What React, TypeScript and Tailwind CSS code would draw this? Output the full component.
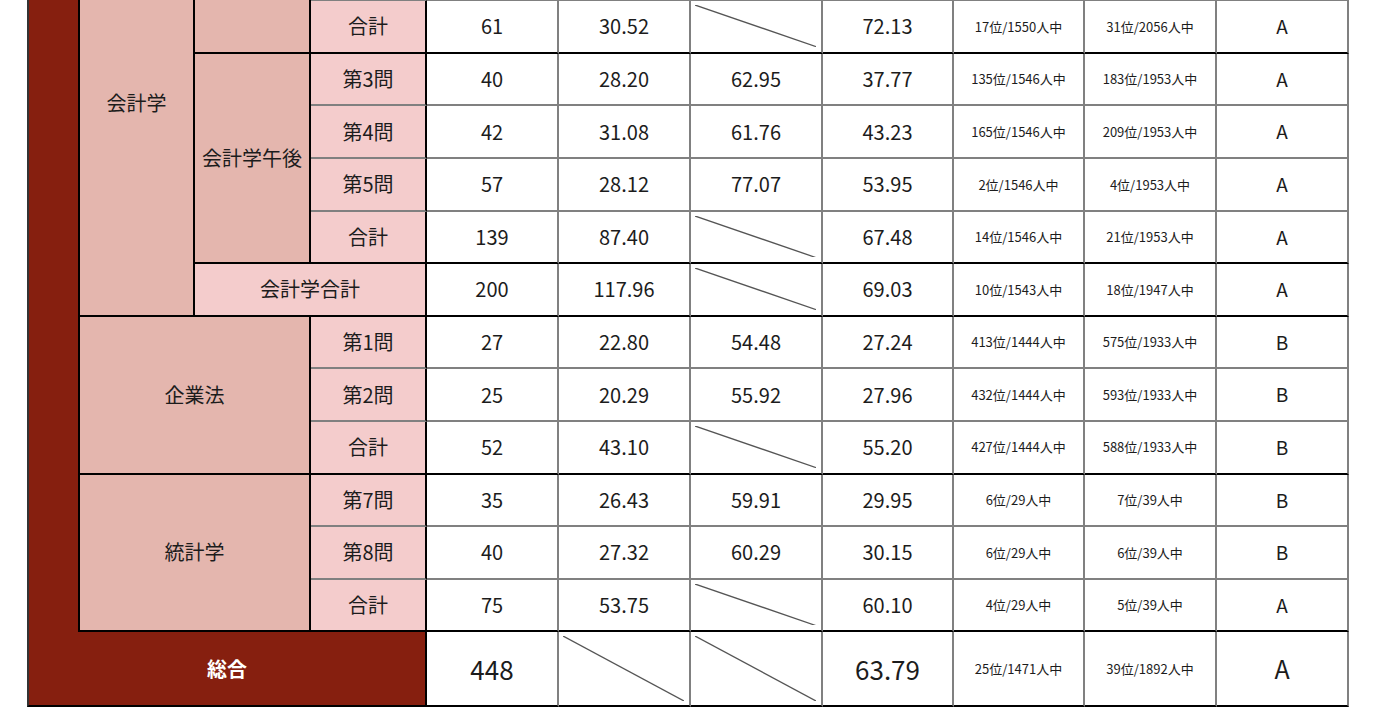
import type { ReactNode } from "react";

type Cell = string | null; // null => diagonal slash

type Row = {
  lead?: ReactNode;
  label?: string;
  vals: Cell[];
  end?: boolean;
};

const catCls =
  "border-r-2 border-b-2 border-black bg-[#e4b6ae] text-center align-middle text-[20px]";
const itemBase =
  "border-r-2 border-b-2 border-r-black bg-[#f4cccc] text-center align-middle text-[20px]";

const Slash = ({ end, big }: { end?: boolean; big?: boolean }) => (
  <td
    className={`relative border-r-2 border-b-2 border-r-[#808080] ${end ? "border-b-black" : "border-b-[#808080]"}`}
  >
    <svg
      className={`absolute left-[4px] top-[4px] w-[calc(100%-9px)] ${big ? "h-[calc(100%-8px)]" : "h-[calc(100%-9px)]"}`}
      viewBox="0 0 100 100"
      preserveAspectRatio="none"
    >
      <line
        x1="0"
        y1="0"
        x2="100"
        y2="100"
        stroke="#555"
        strokeWidth="1.3"
        vectorEffect="non-scaling-stroke"
      />
    </svg>
  </td>
);

const DataCells = ({ vals, end, big }: { vals: Cell[]; end?: boolean; big?: boolean }) => (
  <>
    {vals.map((v, i) => {
      if (v === null) return <Slash key={i} end={end} big={big} />;
      const size =
        i === 4 || i === 5
          ? "text-[13px]"
          : i === 6
            ? big
              ? "text-[25px]"
              : "text-[19px]"
            : big
              ? "text-[26px]"
              : "text-[20px]";
      return (
        <td
          key={i}
          className={`border-r-2 border-b-2 border-r-[#808080] ${end ? "border-b-black" : "border-b-[#808080]"} text-center align-middle ${size}`}
        >
          {v}
        </td>
      );
    })}
  </>
);

// rows of 会計学午前 above the visible area (scrolled out)
const blank: Cell[] = ["", "", "", "", "", "", ""];

const rows: Row[] = [
  {
    lead: (
      <>
        <td rowSpan={14} className="border-l-2 border-r-2 border-l-[#333] border-r-black bg-[#861f0f]" />
        <td rowSpan={8} className={catCls}>
          <div className="-mt-[4px]">会計学</div>
        </td>
        <td rowSpan={3} className={catCls} />
      </>
    ),
    label: " ",
    vals: blank,
  },
  { label: " ", vals: blank },
  { label: "合計", vals: ["61", "30.52", null, "72.13", "17位/1550人中", "31位/2056人中", "A"], end: true },
  {
    lead: (
      <td rowSpan={4} className={catCls}>
        会計学午後
      </td>
    ),
    label: "第3問",
    vals: ["40", "28.20", "62.95", "37.77", "135位/1546人中", "183位/1953人中", "A"],
  },
  { label: "第4問", vals: ["42", "31.08", "61.76", "43.23", "165位/1546人中", "209位/1953人中", "A"] },
  { label: "第5問", vals: ["57", "28.12", "77.07", "53.95", "2位/1546人中", "4位/1953人中", "A"] },
  { label: "合計", vals: ["139", "87.40", null, "67.48", "14位/1546人中", "21位/1953人中", "A"], end: true },
  {
    lead: (
      <td colSpan={2} className={`${itemBase} border-b-black`}>
        会計学合計
      </td>
    ),
    vals: ["200", "117.96", null, "69.03", "10位/1543人中", "18位/1947人中", "A"],
    end: true,
  },
  {
    lead: (
      <td colSpan={2} rowSpan={3} className={catCls}>
        企業法
      </td>
    ),
    label: "第1問",
    vals: ["27", "22.80", "54.48", "27.24", "413位/1444人中", "575位/1933人中", "B"],
  },
  { label: "第2問", vals: ["25", "20.29", "55.92", "27.96", "432位/1444人中", "593位/1933人中", "B"] },
  { label: "合計", vals: ["52", "43.10", null, "55.20", "427位/1444人中", "588位/1933人中", "B"], end: true },
  {
    lead: (
      <td colSpan={2} rowSpan={3} className={catCls}>
        統計学
      </td>
    ),
    label: "第7問",
    vals: ["35", "26.43", "59.91", "29.95", "6位/29人中", "7位/39人中", "B"],
  },
  { label: "第8問", vals: ["40", "27.32", "60.29", "30.15", "6位/29人中", "6位/39人中", "B"] },
  { label: "合計", vals: ["75", "53.75", null, "60.10", "4位/29人中", "5位/39人中", "A"], end: true },
];

export default function App() {
  return (
    <div className="h-[721px] overflow-hidden bg-white font-['Noto_Sans_CJK_JP','Noto_Sans',sans-serif] text-[#1c1c1c]">
      <table className="-mt-[104px] ml-[27px] w-[1322px] table-fixed border-separate border-spacing-0">
        <colgroup>
          <col className="w-[53px]" />
          <col className="w-[115px]" />
          <col className="w-[116px]" />
          <col className="w-[116px]" />
          <col className="w-[132px]" />
          <col className="w-[132px]" />
          <col className="w-[132px]" />
          <col className="w-[131px]" />
          <col className="w-[131px]" />
          <col className="w-[132px]" />
          <col className="w-[132px]" />
        </colgroup>
        <tbody>
          {rows.map((r, i) => (
            <tr key={i} className="h-[52.6px]">
              {r.lead}
              {r.label && (
                <td className={`${itemBase} ${r.end ? "border-b-black" : "border-b-[#808080]"}`}>
                  {r.label}
                </td>
              )}
              <DataCells vals={r.vals} end={r.end} />
            </tr>
          ))}
          <tr className="h-[75px]">
            <td
              colSpan={4}
              className="border-l-2 border-r-2 border-b-2 border-l-[#333] border-r-black border-b-black bg-[#861f0f] text-center align-middle text-[20px] font-bold text-white"
            >
              総合
            </td>
            <DataCells
              vals={["448", null, null, "63.79", "25位/1471人中", "39位/1892人中", "A"]}
              end
              big
            />
          </tr>
        </tbody>
      </table>
    </div>
  );
}
